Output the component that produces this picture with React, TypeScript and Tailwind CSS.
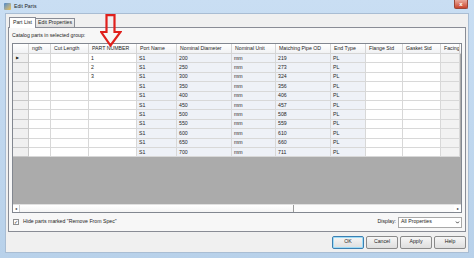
import { ChevronDown } from "lucide-react"

const cols = [
  { name: "ngth", w: 22, bg: "bg-white" },
  { name: "Cut Length", w: 38, bg: "bg-white" },
  { name: "PART NUMBER", w: 48, bg: "bg-white" },
  { name: "Port Name", w: 40, bg: "bg-[#eef1f7]" },
  { name: "Nominal Diameter", w: 55, bg: "bg-[#eef1f7]" },
  { name: "Nominal Unit", w: 44, bg: "bg-[#eef1f7]" },
  { name: "Matching Pipe OD", w: 55, bg: "bg-[#eef1f7]" },
  { name: "End Type", w: 35, bg: "bg-[#eef1f7]" },
  { name: "Flange Std", w: 37, bg: "bg-white" },
  { name: "Gasket Std", w: 38, bg: "bg-white" },
  { name: "Facing", w: 19, bg: "bg-[#f2f2f2]" },
]

const rows = [
  ["", "", "1", "S1", "200", "mm", "219", "PL", "", "", ""],
  ["", "", "2", "S1", "250", "mm", "273", "PL", "", "", ""],
  ["", "", "3", "S1", "300", "mm", "324", "PL", "", "", ""],
  ["", "", "", "S1", "350", "mm", "356", "PL", "", "", ""],
  ["", "", "", "S1", "400", "mm", "406", "PL", "", "", ""],
  ["", "", "", "S1", "450", "mm", "457", "PL", "", "", ""],
  ["", "", "", "S1", "500", "mm", "508", "PL", "", "", ""],
  ["", "", "", "S1", "550", "mm", "559", "PL", "", "", ""],
  ["", "", "", "S1", "600", "mm", "610", "PL", "", "", ""],
  ["", "", "", "S1", "650", "mm", "660", "PL", "", "", ""],
  ["", "", "", "S1", "700", "mm", "711", "PL", "", "", ""],
]

function Btn({ label, focus }: { label: string; focus?: boolean }) {
  return (
    <div
      className={
        "w-[32px] h-[13px] flex items-center justify-center rounded-[2px] border bg-gradient-to-b from-[#f6f6f6] to-[#dedede] " +
        (focus ? "border-[#3c7fb1] shadow-[inset_0_0_0_1px_#9fdcf7]" : "border-[#8a8a8a]")
      }
    >
      {label}
    </div>
  )
}

export default function App() {
  return (
    <div className="w-[474px] h-[258px] overflow-hidden flex flex-col bg-gradient-to-b from-[#c9def3] to-[#b8d1ea] text-[5.2px] leading-none text-[#1e1e1e] [font-family:'Liberation_Sans',Arial,sans-serif] relative">
      {/* title bar */}
      <div className="h-[13px] flex items-center pl-[4px] pr-[6px] gap-[3px]">
        <div className="w-[7px] h-[7px] bg-gradient-to-br from-[#4a86c8] to-[#f0c040] rounded-[1px]" />
        <span className="text-[5.2px] text-[#1e1e1e]">Edit Parts</span>
        <div className="ml-auto self-start w-[14px] h-[9px] rounded-b-[2px] bg-gradient-to-b from-[#e9a99b] to-[#c8432c] border border-t-0 border-[#9b4636] flex items-center justify-center text-white text-[6px] font-bold">
          x
        </div>
      </div>

      {/* client area */}
      <div className="flex-1 mx-[5px] mb-[5px] bg-[#f0f0f0] flex flex-col border border-[#a9bdd3]">
        {/* tabs */}
        <div className="flex items-end pl-[3px] pt-[2px] h-[13px]">
          <div className="h-[11px] px-[3px] flex items-center bg-white border border-b-0 border-[#898c95] relative -mb-px z-10">Part List</div>
          <div className="h-[9px] px-[2px] flex items-center bg-gradient-to-b from-[#f2f2f2] to-[#e0e0e0] border border-l-0 border-b-0 border-[#898c95]">Edit Properties</div>
        </div>

        {/* tab panel */}
        <div className="mx-[2px] h-[205px] border border-[#898c95] bg-[#f7f7f7] flex flex-col px-[3px]">
          <div className="h-[15px] flex items-center">Catalog parts in selected group:</div>

          {/* grid */}
          <div className="h-[170px] border border-[#828790] bg-[#ababab] flex flex-col">
            <div className="flex h-[10px] bg-gradient-to-b from-white to-[#f1f2f4] border-b border-[#d5d5d5]">
              <div className="w-[16px] border-r border-[#d5d5d5]" />
              {cols.map((c) => (
                <div
                  key={c.name}
                  style={{ width: c.w }}
                  className="shrink-0 border-r border-[#d5d5d5] flex items-center pl-[3px] overflow-hidden whitespace-nowrap"
                >
                  {c.name}
                </div>
              ))}
            </div>
            {rows.map((r, i) => (
              <div key={i} className="flex h-[9.4px]">
                <div className="w-[16px] shrink-0 bg-[#f0f0f0] border-r border-b border-[#c8c8c8] flex items-center pl-[3px] text-[4px]">
                  {i === 0 ? "▶" : ""}
                </div>
                {cols.map((c, j) => (
                  <div
                    key={j}
                    style={{ width: c.w }}
                    className={"shrink-0 border-r border-b border-[#d8d8d8] flex items-center pl-[2px] overflow-hidden whitespace-nowrap " + c.bg}
                  >
                    {r[j]}
                  </div>
                ))}
              </div>
            ))}
            <div className="flex-1" />
            {/* horizontal scrollbar */}
            <div className="h-[8px] flex bg-[#f0f0f0] border-t border-[#e0e0e0]">
              <div className="w-[7px] flex items-center justify-center text-[4px] bg-white border-r border-[#d0d0d0]">◂</div>
              <div className="w-[274px] bg-gradient-to-b from-white to-[#f4f4f4] border-r border-[#9a9a9a]" />
              <div className="flex-1 bg-[#fbfbfb]" />
              <div className="w-[7px] flex items-center justify-center text-[4px] bg-white">▸</div>
            </div>
          </div>

          {/* checkbox + display */}
          <div className="flex items-center flex-1">
            <div className="w-[6px] h-[6px] border border-[#8f8f8f] bg-white flex items-center justify-center text-[5px] text-[#333] ml-[1px]">✓</div>
            <span className="ml-[4px]">Hide parts marked "Remove From Spec"</span>
            <span className="ml-auto mr-[2px]">Display:</span>
            <div className="w-[64px] h-[11px] border border-[#a8a8a8] bg-white flex items-center pl-[2px]">
              <span>All Properties</span>
              <ChevronDown className="ml-auto mr-[1px] w-[5px] h-[5px]" strokeWidth={4} />
            </div>
          </div>
        </div>

        {/* dialog buttons */}
        <div className="flex-1 flex items-center justify-end gap-[2px] pr-[2px]">
          <Btn label="OK" focus />
          <Btn label="Cancel" />
          <Btn label="Apply" />
          <Btn label="Help" />
        </div>
      </div>

      {/* red annotation arrow */}
      <svg className="absolute left-[100px] top-[14px]" width="22" height="33" viewBox="0 0 22 33">
        <path d="M6.5 1.2 H14.5 V18 H20.5 L10.5 31.5 L1.2 18 H6.5 Z" fill="none" stroke="#e0201c" strokeWidth="2.2" strokeLinejoin="miter" />
      </svg>
    </div>
  )
}
